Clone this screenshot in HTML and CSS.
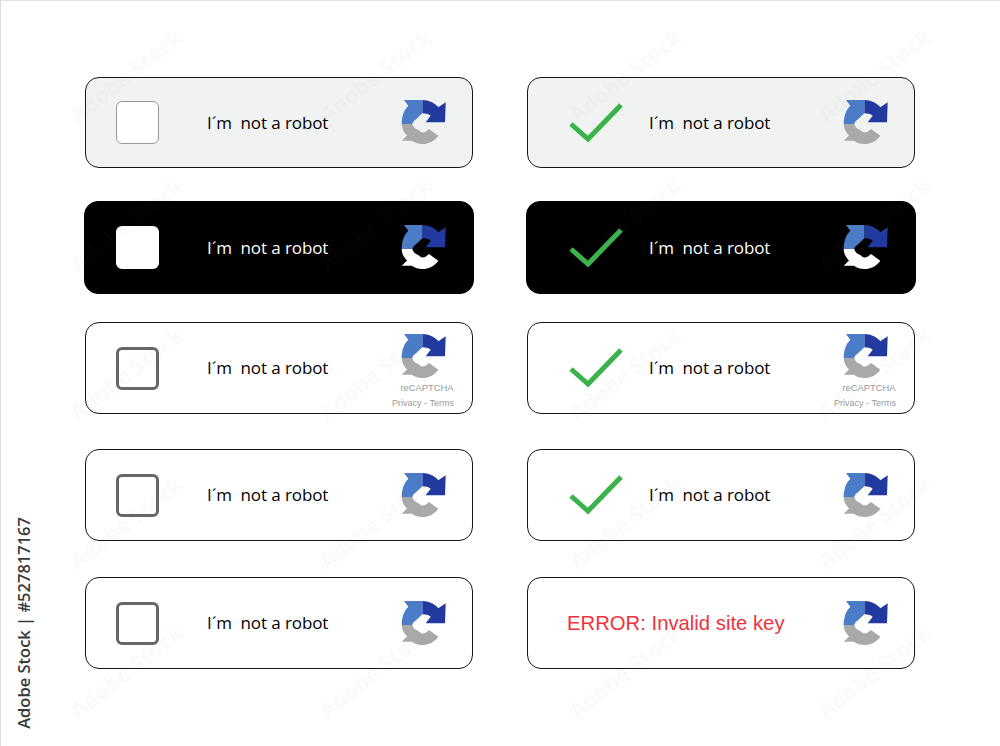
FILE: index.html
```html
<!DOCTYPE html>
<html lang="en">
<head>
  <meta charset="UTF-8">
  <meta name="viewport" content="width=device-width, initial-scale=1.0">
  <title>reCAPTCHA widgets</title>
  <link rel="stylesheet" href="styles.css">
</head>
<body>
  <svg class="defs" aria-hidden="true">
    <symbol id="logo" viewBox="0 0 45 45">
      <path fill="#22399f" d="M21.300 0C28 .2 33.500 2.500 37.300 7.300L44.700 2.300 44 22.300H24.700L29.700 15.700C27.500 14 24.500 13.300 21.300 13.300Z"/>
      <path fill="#4a7cc8" d="M3 0H21.300V13.300L15.300 19C13 20.500 11.800 22 11.300 24H.7C.7 16 3 10 7.300 5.700Z"/>
      <path fill="currentColor" d="M.7 24H11.300C12 27 14 29 17.300 30C19 31.500 20 32.400 21.300 32.400C24 32.400 26 31 28 29L37.300 35.700C33.500 41 28 44 21.300 44C17.500 44 14 43 11 40.700L.7 40.700 6 35.500C2.500 32 .7 28 .7 24Z"/>
    </symbol>
    <symbol id="tick" viewBox="0 0 54 42">
      <path fill="none" stroke="#3cb34a" stroke-width="5" d="M2 22L19 37 52 3"/>
    </symbol>
  </svg>

  <div class="widgets">
    <div class="row row-1">
      <div class="card card-light">
        <span class="slot"><span class="box box-thin"></span></span>
        <span class="label">I´m&nbsp; not a robot</span>
        <span class="brand"><svg class="logo"><use href="#logo"/></svg></span>
      </div>
      <div class="card card-light">
        <span class="slot"><svg class="tick"><use href="#tick"/></svg></span>
        <span class="label">I´m&nbsp; not a robot</span>
        <span class="brand"><svg class="logo"><use href="#logo"/></svg></span>
      </div>
    </div>

    <div class="row row-2">
      <div class="card card-dark">
        <span class="slot"><span class="box box-solid"></span></span>
        <span class="label">I´m&nbsp; not a robot</span>
        <span class="brand"><svg class="logo"><use href="#logo"/></svg></span>
      </div>
      <div class="card card-dark">
        <span class="slot"><svg class="tick"><use href="#tick"/></svg></span>
        <span class="label">I´m&nbsp; not a robot</span>
        <span class="brand"><svg class="logo"><use href="#logo"/></svg></span>
      </div>
    </div>

    <div class="row row-3">
      <div class="card">
        <span class="slot"><span class="box"></span></span>
        <span class="label">I´m&nbsp; not a robot</span>
        <span class="brand brand-full">
          <svg class="logo"><use href="#logo"/></svg>
          <span class="brand-name">reCAPTCHA</span>
          <span class="brand-links">Privacy - Terms</span>
        </span>
      </div>
      <div class="card">
        <span class="slot"><svg class="tick"><use href="#tick"/></svg></span>
        <span class="label">I´m&nbsp; not a robot</span>
        <span class="brand brand-full">
          <svg class="logo"><use href="#logo"/></svg>
          <span class="brand-name">reCAPTCHA</span>
          <span class="brand-links">Privacy - Terms</span>
        </span>
      </div>
    </div>

    <div class="row row-4">
      <div class="card">
        <span class="slot"><span class="box"></span></span>
        <span class="label">I´m&nbsp; not a robot</span>
        <span class="brand"><svg class="logo"><use href="#logo"/></svg></span>
      </div>
      <div class="card">
        <span class="slot"><svg class="tick"><use href="#tick"/></svg></span>
        <span class="label">I´m&nbsp; not a robot</span>
        <span class="brand"><svg class="logo"><use href="#logo"/></svg></span>
      </div>
    </div>

    <div class="row">
      <div class="card">
        <span class="slot"><span class="box"></span></span>
        <span class="label">I´m&nbsp; not a robot</span>
        <span class="brand"><svg class="logo"><use href="#logo"/></svg></span>
      </div>
      <div class="card">
        <span class="error">ERROR: Invalid site key</span>
        <span class="brand"><svg class="logo"><use href="#logo"/></svg></span>
      </div>
    </div>
  </div>

  <!-- Marca d'agua da imagem original -->
  <div class="stamps" aria-hidden="true">
    <span>Adobe Stock</span><span>Adobe Stock</span><span>Adobe Stock</span><span>Adobe Stock</span>
    <span>Adobe Stock</span><span>Adobe Stock</span><span>Adobe Stock</span><span>Adobe Stock</span>
    <span>Adobe Stock</span><span>Adobe Stock</span><span>Adobe Stock</span><span>Adobe Stock</span>
    <span>Adobe Stock</span><span>Adobe Stock</span><span>Adobe Stock</span><span>Adobe Stock</span>
    <span>Adobe Stock</span><span>Adobe Stock</span><span>Adobe Stock</span><span>Adobe Stock</span>
  </div>
  <div class="credit">Adobe Stock | #527817167</div>
</body>
</html>
```

FILE: styles.css
```css
* {
  margin: 0;
  padding: 0;
  box-sizing: border-box;
}

html, body {
  height: 746px;
  overflow: hidden;
}

body {
  position: relative;
  background-color: #fff;
  border-left: 1px solid #ddd;
  border-top: 1px solid #e4e4e4;
  font-family: 'Open Sans', sans-serif;
  color: #000;
}

.defs {
  display: none;
}

/* Grade de widgets */
.widgets {
  display: flex;
  flex-direction: column;
  padding: 76px 0 0 84px;
}

.row {
  display: grid;
  grid-template-columns: 388px 388px;
  column-gap: 54px;
  height: 92px;
}

.row-1 {
  height: 91px;
  margin-bottom: 33px;
}

.row-2 {
  height: 93px;
  margin-bottom: 28px;
}

.row-3 {
  margin-bottom: 35px;
}

.row-4 {
  margin-bottom: 36px;
}

/* Card */
.card {
  display: flex;
  align-items: center;
  padding: 0 18px 0 30px;
  border: 1.5px solid #161616;
  border-radius: 14px;
  background-color: #fff;
}

.card-light {
  background-color: #f1f3f2;
}

.card-dark {
  margin: 0 -1px;
  padding: 0 19px 0 31px;
  background-color: #000;
  border-color: #000;
  color: #fff;
}

.slot {
  display: flex;
  align-items: center;
  width: 91px;
  height: 44px;
  flex: none;
}

.box {
  display: block;
  width: 43px;
  height: 43px;
  border: 3px solid #666;
  border-radius: 6px;
}

.box-thin {
  background-color: #fff;
  border: 1px solid #999;
}

.box-solid {
  background-color: #fff;
  border-color: #fff;
}

.tick {
  display: block;
  width: 54px;
  height: 42px;
  margin-left: 11px;
}

.label {
  font-size: 17px;
  letter-spacing: -0.1px;
  line-height: 24px;
  white-space: nowrap;
}

.error {
  margin-left: 9px;
  font-family: 'Liberation Sans', Arial, sans-serif;
  font-size: 20.3px;
  color: #ee3340;
  white-space: nowrap;
}

/* Logo */
.brand {
  display: flex;
  flex-direction: column;
  align-items: center;
  width: 62px;
  margin-left: auto;
  color: #a9a9a9;
}

.card-dark .brand {
  color: #fff;
}

.brand-full {
  align-self: flex-start;
  padding-top: 11px;
}

.logo {
  display: block;
  width: 45px;
  height: 45px;
  flex: none;
}

.brand-name {
  margin: 2px 0 0 8px;
  font-family: 'Liberation Sans', Arial, sans-serif;
  font-size: 9.4px;
  line-height: 14px;
  color: #999;
}

.brand-links {
  margin-top: 2px;
  font-family: 'Liberation Sans', Arial, sans-serif;
  font-size: 9px;
  line-height: 12px;
  color: #999;
  white-space: nowrap;
}

/* Marca d'agua */
.stamps {
  position: absolute;
  top: 0;
  left: 0;
  width: 998px;
  height: 744px;
  display: grid;
  grid-template-columns: repeat(4, 1fr);
  grid-template-rows: repeat(5, 1fr);
  place-items: center;
  pointer-events: none;
}

.stamps span {
  font-size: 22px;
  font-weight: 700;
  white-space: nowrap;
  color: rgba(120, 120, 120, 0.04);
  transform: rotate(-38deg);
}

.credit {
  position: absolute;
  left: 13px;
  top: 516px;
  writing-mode: vertical-rl;
  transform: rotate(180deg);
  font-size: 16.5px;
  font-weight: 600;
  line-height: 20px;
  color: #3a3a3a;
  white-space: nowrap;
}
```
